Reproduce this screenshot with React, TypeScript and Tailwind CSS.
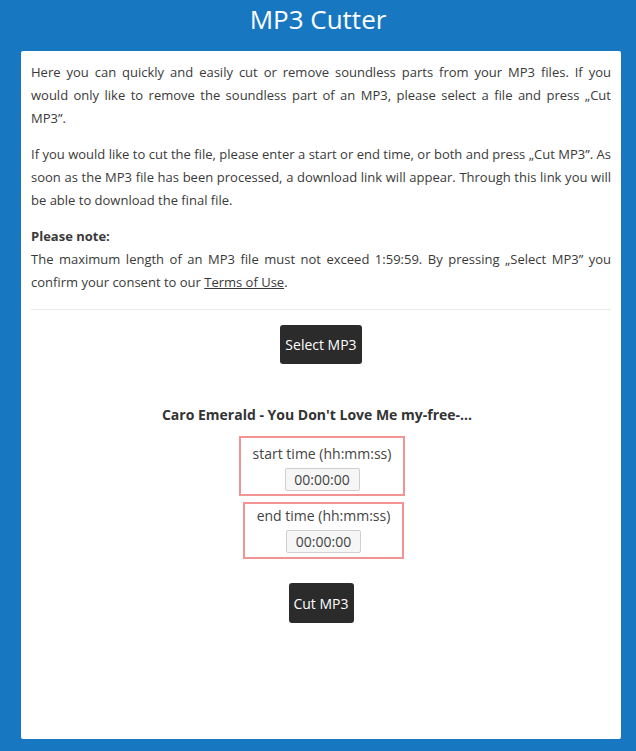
const font = { fontFamily: '"Open Sans", "Noto Sans", sans-serif' };

function TimeField({ label, wide }: { label: string; wide?: boolean }) {
  return (
    <div
      className={
        "flex flex-col items-center border-2 border-[#f39393] " +
        (wide ? "w-[166px] pt-[6px] pb-[3px]" : "w-[161px] pt-[2px] pb-[4px]")
      }
    >
      <span className="text-[14px] leading-[20px] text-[#444]">{label}</span>
      <span className="mt-[4px] flex h-[23px] w-[75px] items-center justify-center rounded-[2px] border border-[#cfcfcf] bg-[#f6f6f6] text-[14px] text-[#444]">
        00:00:00
      </span>
    </div>
  );
}

export default function App() {
  return (
    <div className="min-h-[751px] w-[636px] bg-[#1777c1] pb-[12px]" style={font}>
      <h1 className="flex h-[51px] items-start justify-center pt-[1px] text-[26px] leading-[36px] text-white">
        MP3 Cutter
      </h1>
      <div className="ml-[21px] h-[688px] w-[600px] rounded-[2px] bg-white px-[10px] pt-[10px]">
        <div className="text-justify text-[13px] leading-[23px] text-[#3a3a3a]">
          <p>
            Here you can quickly and easily cut or remove soundless parts from your MP3 files. If you{" "}
            <span className="whitespace-nowrap">would only</span> like to remove the soundless part of an MP3,
            please select a file and press „Cut MP3”.
          </p>
          <p className="mt-[13px]">
            If you would like to cut the file, please enter a start or end time, or both and press „Cut MP3”. As
            soon as the MP3 file has been processed, a download link will appear. Through this link you will be
            able to download the final file.
          </p>
          <p className="mt-[13px]">
            <b className="font-bold">Please note:</b>
            <br />
            The maximum length of an MP3 file must not exceed 1:59:59. By pressing „Select MP3” you confirm your
            consent to our <span className="underline">Terms of Use</span>.
          </p>
        </div>
        <hr className="mt-[15px] border-t border-[#eaeaea]" />
        <div className="flex flex-col items-center">
          <button className="mt-[15px] h-[39px] w-[82px] rounded-[3px] bg-[#2b2b2b] text-[14px] text-white">
            Select MP3
          </button>
          <div className="mt-[41px] pr-[8px] text-[14px] font-bold leading-[20px] text-[#333]">
            Caro Emerald - You Don't Love Me my-free-...
          </div>
          <div className="mt-[11px] flex w-full flex-col gap-[6px]">
            <div className="flex justify-center pl-[2px]">
              <TimeField label="start time (hh:mm:ss)" wide />
            </div>
            <div className="flex justify-center pl-[5px]">
              <TimeField label="end time (hh:mm:ss)" />
            </div>
          </div>
          <button className="mt-[24px] h-[40px] w-[65px] rounded-[3px] bg-[#2b2b2b] text-[14px] text-white">
            Cut MP3
          </button>
        </div>
      </div>
    </div>
  );
}
